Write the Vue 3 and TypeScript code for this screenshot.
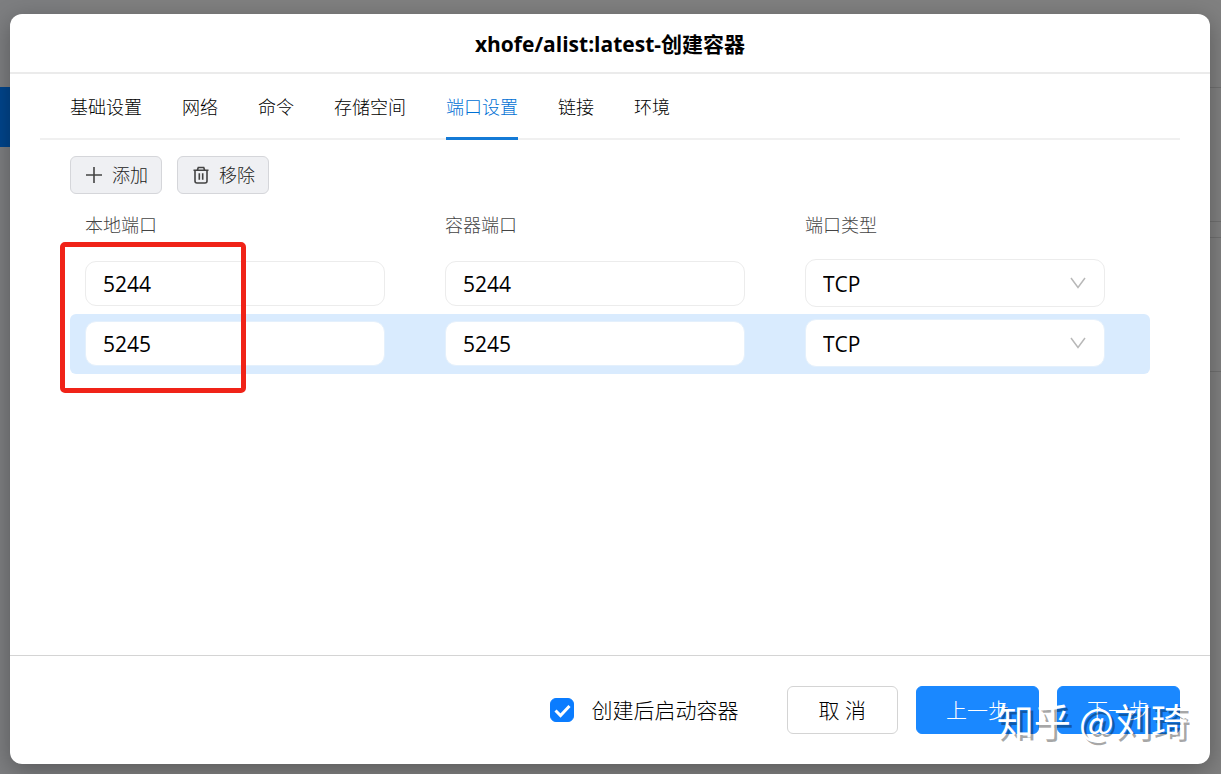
<script setup lang="ts">
import { ref } from 'vue'

interface PortRow {
  id: number
  local: string
  container: string
  type: 'TCP' | 'UDP'
}

const tabs: string[] = ['基础设置', '网络', '命令', '存储空间', '端口设置', '链接', '环境']
const activeTab = ref('端口设置')
const selectedRow = ref(2)
const startAfterCreate = ref(true)

const rows = ref<PortRow[]>([
  { id: 1, local: '5244', container: '5244', type: 'TCP' },
  { id: 2, local: '5245', container: '5245', type: 'TCP' },
])
</script>

<template>
  <div class="backdrop">
    <div class="page-behind" aria-hidden="true">
      <span class="side-column"></span>
      <span class="side-active"></span>
      <span class="rule rule-a"></span>
      <span class="rule rule-b"></span>
      <span class="rule rule-c"></span>
      <span class="rule rule-d"></span>
    </div>

    <section class="dialog" role="dialog" aria-labelledby="dialog-title">
      <header class="dialog-header">
        <h1 id="dialog-title">xhofe/alist:latest-创建容器</h1>
      </header>

      <nav class="tabs" role="tablist">
        <button
          v-for="tab in tabs"
          :key="tab"
          type="button"
          role="tab"
          class="tab"
          :class="{ active: tab === activeTab }"
          :aria-selected="tab === activeTab"
          @click="activeTab = tab"
        >{{ tab }}</button>
      </nav>

      <main class="panel">
        <div class="toolbar">
          <button type="button" class="tool">
            <svg viewBox="0 0 18 18" width="18" height="18" aria-hidden="true">
              <path d="M9 1v16M1 9h16" />
            </svg>
            <span>添加</span>
          </button>
          <button type="button" class="tool">
            <svg viewBox="0 0 18 18" width="18" height="18" aria-hidden="true">
              <path d="M1.500 4.300h15M5.300 4.300L6.300 1.500h5.400l1 2.800M3 4.300v10.700q0 2 2 2h8q2 0 2-2V4.300M7.300 7.300v6.400M10.700 7.300v6.400" />
            </svg>
            <span>移除</span>
          </button>
        </div>

        <div class="table-wrap">
          <table class="ports">
            <thead>
              <tr>
                <th scope="col">本地端口</th>
                <th scope="col">容器端口</th>
                <th scope="col">端口类型</th>
              </tr>
            </thead>
            <tbody>
              <tr
                v-for="row in rows"
                :key="row.id"
                :class="{ selected: row.id === selectedRow }"
                @click="selectedRow = row.id"
              >
                <td><input v-model="row.local" type="text" class="field" aria-label="本地端口" /></td>
                <td><input v-model="row.container" type="text" class="field" aria-label="容器端口" /></td>
                <td>
                  <div class="select-box">
                    <select v-model="row.type" class="field" aria-label="端口类型">
                      <option>TCP</option>
                      <option>UDP</option>
                    </select>
                    <svg class="chevron" viewBox="0 0 16 12" width="16" height="12" aria-hidden="true">
                      <path d="M1 1l7 9.500L15 1" />
                    </svg>
                  </div>
                </td>
              </tr>
            </tbody>
          </table>
          <span class="marker" aria-hidden="true"></span>
        </div>
      </main>

      <footer class="dialog-footer">
        <label class="check">
          <span class="check-box">
            <input v-model="startAfterCreate" type="checkbox" />
            <svg v-if="startAfterCreate" viewBox="0 0 24 24" width="24" height="24" aria-hidden="true">
              <path d="M5.500 12.500l5 5L19.500 8" />
            </svg>
          </span>
          <span class="check-text">创建后启动容器</span>
        </label>
        <button type="button" class="btn">取 消</button>
        <button type="button" class="btn primary">上一步</button>
        <button type="button" class="btn primary">下一步</button>
      </footer>
    </section>

    <span class="watermark">知乎 @刘琦</span>
  </div>
</template>

<style>
body {
  margin: 0;
}
</style>

<style scoped>
.backdrop,
.backdrop * {
  box-sizing: border-box;
}

.backdrop {
  position: relative;
  display: flex;
  min-height: 100vh;
  padding: 14px 11px 10px 10px;
  overflow: hidden;
  background: #808080;
  color: #000;
  font-family: "Open Sans", "Noto Sans CJK SC", sans-serif;
  font-size: 18px;
}

.backdrop button,
.backdrop input,
.backdrop select {
  margin: 0;
  font-family: inherit;
}

.page-behind {
  position: absolute;
  inset: 0;
}

.side-column {
  position: absolute;
  inset: 0 auto 0 0;
  width: 70px;
  background: #7d7e80;
}

.side-active {
  position: absolute;
  top: 87px;
  left: 0;
  width: 70px;
  height: 60px;
  background: #00458c;
}

.rule {
  position: absolute;
  right: 0;
  width: 40px;
  height: 1px;
  background: #707070;
}

.rule-a { top: 87px; }
.rule-b { top: 221px; }
.rule-c { top: 237px; }
.rule-d { top: 371px; }

.dialog {
  position: relative;
  display: flex;
  flex: 1;
  flex-direction: column;
  min-width: 0;
  border-radius: 12px;
  background: #fff;
  box-shadow: 0 6px 24px rgba(0, 0, 0, 0.3);
}

.dialog-header {
  padding: 15px 24px 13px;
  border-bottom: 2px solid #ebebeb;
  text-align: center;
}

.dialog-header h1 {
  margin: 0;
  font-size: 21px;
  font-weight: 700;
  line-height: 30px;
}

.tabs {
  display: flex;
  gap: 40px;
  margin: 0 30px;
  padding: 0 30px;
  border-bottom: 2px solid #f0f0f0;
}

.tab {
  height: 66px;
  padding: 0;
  border: 0;
  border-bottom: 3px solid transparent;
  background: none;
  color: #000;
  font-size: 18px;
  font-weight: 300;
}

.backdrop .tab {
  margin-bottom: -2px;
}

.tab.active {
  border-color: #147ad6;
  color: #0070d4;
}

.panel {
  flex: 1;
  padding: 16px 60px;
}

.toolbar {
  display: flex;
  gap: 15px;
}

.tool {
  display: flex;
  align-items: center;
  gap: 9px;
  height: 38px;
  padding: 0 13px 0 14px;
  border: 1px solid #d5d6da;
  border-radius: 6px;
  background: #eff0f3;
  color: #222;
  font-size: 18px;
  font-weight: 300;
}

.tool span {
  padding-bottom: 2px;
}

.tool svg {
  fill: none;
  stroke: #444;
  stroke-width: 1.6;
}

.table-wrap {
  position: relative;
}

.ports {
  width: 100%;
  border-collapse: separate;
  border-spacing: 0;
  table-layout: fixed;
}

.ports th {
  height: 60px;
  padding: 0 15px;
  color: #444;
  font-size: 18px;
  font-weight: 300;
  text-align: left;
}

.ports td {
  height: 60px;
  padding: 0 45px 2px 15px;
  vertical-align: middle;
}

.selected td {
  background: #d9ebfe;
}

.selected td:first-child {
  border-radius: 6px 0 0 6px;
}

.selected td:last-child {
  border-radius: 0 6px 6px 0;
}

.field {
  display: block;
  width: 100%;
  height: 45px;
  padding: 1px 17px 0;
  border: 1px solid #ececec;
  border-radius: 11px;
  outline: 0;
  background: #fff;
  color: #000;
  font-size: 21px;
}

select.field {
  height: 48px;
  padding: 2px 17px 0;
  appearance: none;
}

.selected .field {
  border-color: #e4f0fc;
}

.select-box {
  position: relative;
}

.chevron {
  position: absolute;
  top: 18px;
  right: 19px;
  fill: none;
  stroke: #b8b8b8;
  stroke-width: 1.5;
  pointer-events: none;
}

.marker {
  position: absolute;
  top: 48px;
  left: -10px;
  width: 186px;
  height: 151px;
  border: 5px solid #f02318;
  border-radius: 5px;
  pointer-events: none;
}

.dialog-footer {
  display: flex;
  align-items: center;
  justify-content: flex-end;
  gap: 18px;
  padding: 30px;
  border-top: 1px solid #d4d4d4;
}

.check {
  display: flex;
  align-items: center;
  gap: 18px;
  margin-right: 30px;
  font-size: 21px;
  font-weight: 300;
}

.check-text {
  padding-bottom: 2px;
}

.check-box {
  position: relative;
  width: 24px;
  height: 24px;
}

.check-box input {
  display: block;
  width: 24px;
  height: 24px;
  border: 1px solid #b8b8b8;
  border-radius: 6px;
  appearance: none;
}

.check-box input:checked {
  border-color: #0a7cff;
  background: #0a7cff;
}

.check-box svg {
  position: absolute;
  inset: 0;
  fill: none;
  stroke: #fff;
  stroke-width: 3;
  pointer-events: none;
}

.btn {
  height: 48px;
  padding: 0 31px 2px;
  border: 1px solid #d4d4d4;
  border-radius: 6px;
  background: #fff;
  color: #000;
  font-size: 21px;
  font-weight: 300;
}

.btn.primary {
  padding: 0 29px 2px;
  border-color: #1a88ff;
  background: #1a88ff;
  color: #fff;
}

.watermark {
  position: absolute;
  right: 33px;
  bottom: 28px;
  color: #fff;
  font-family: "Noto Sans CJK SC", sans-serif;
  font-size: 37px;
  line-height: 52px;
  text-shadow: 3px 3px 0 rgba(0, 0, 0, 0.35);
  white-space: nowrap;
  pointer-events: none;
}
</style>
